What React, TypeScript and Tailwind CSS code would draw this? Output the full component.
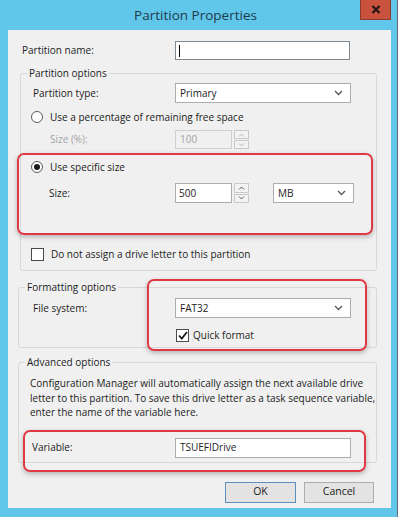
import React from "react";

function Chevron() {
  return (
    <svg width="9" height="6" viewBox="0 0 9 6">
      <path d="M1 1l3.5 3.5L8 1" stroke="#555" strokeWidth="1.3" fill="none" />
    </svg>
  );
}

function Select({ value, width }: { value: string; width: string }) {
  return (
    <div className={`${width} h-full bg-white border border-[#acacac] flex items-center justify-between pl-[4px] pr-[7px]`}>
      <span>{value}</span>
      <Chevron />
    </div>
  );
}

function Spinner({ disabled }: { disabled?: boolean }) {
  const c = disabled ? "#b5b5b5" : "#606060";
  return (
    <div className="ml-[2px] w-[15px] h-full flex flex-col gap-[1px]">
      <div className="flex-1 border border-[#c9c9c9] bg-[#f3f3f3] flex items-center justify-center">
        <svg width="7" height="4" viewBox="0 0 7 4">
          <path d="M1 3.5l2.5-2.5L6 3.5" stroke={c} strokeWidth="1" fill="none" />
        </svg>
      </div>
      <div className="flex-1 border border-[#c9c9c9] bg-[#f3f3f3] flex items-center justify-center">
        <svg width="7" height="4" viewBox="0 0 7 4">
          <path d="M1 0.5l2.5 2.5L6 0.5" stroke={c} strokeWidth="1" fill="none" />
        </svg>
      </div>
    </div>
  );
}

function Radio({ checked }: { checked?: boolean }) {
  return (
    <div className="w-[12px] h-[12px] rounded-full border border-[#5a5a5a] bg-white flex items-center justify-center">
      {checked && <div className="w-[6px] h-[6px] rounded-full bg-[#1a1a1a]" />}
    </div>
  );
}

function Checkbox({ checked }: { checked?: boolean }) {
  return (
    <div className="w-[13px] h-[13px] border border-[#4a4a4a] bg-white flex items-center justify-center">
      {checked && (
        <svg width="10" height="9" viewBox="0 0 10 9">
          <path d="M1 4.5l2.8 3L9 1" stroke="#1a1a1a" strokeWidth="1.8" fill="none" />
        </svg>
      )}
    </div>
  );
}

function Legend({ children }: { children: React.ReactNode }) {
  return (
    <span className="self-start -mt-[8px] ml-[6px] px-[2px] h-[14px] leading-[14px] bg-[#f0f0f0]">
      {children}
    </span>
  );
}

export default function App() {
  return (
    <div className="w-[400px] h-[517px] flex bg-white overflow-hidden font-['Open_Sans','Noto_Sans',sans-serif] text-[10px] text-[#1c1c1c]">
      <div className="w-[397px] h-full bg-[#60c6ea] flex flex-col">
        {/* title bar */}
        <div className="h-[30px] flex">
          <div className="flex-1" />
          <div className="text-[13.5px] text-[#1f3b4b] leading-[30px]">Partition Properties</div>
          <div className="flex-1 flex justify-end items-start pr-[6px]">
            <div className="w-[31px] h-[20px] bg-[#c9523f] border border-[#8e3a2c] border-t-0 flex items-center justify-center">
              <svg width="10" height="9" viewBox="0 0 10 9">
                <path d="M1.5 1l7 7M8.5 1l-7 7" stroke="#231512" strokeWidth="2.2" />
              </svg>
            </div>
          </div>
        </div>

        {/* client area */}
        <div className="relative ml-[8px] mr-[6px] h-[478px] bg-[#f0f0f0] flex flex-col">
          <div className="mt-[11px] h-[19px] flex items-center">
            <div className="w-[167px] pl-[14px]">Partition name:</div>
            <div className="w-[175px] h-full bg-white border border-[#7f8a93] flex items-center pl-[3px]">
              <div className="w-px h-[12px] bg-black" />
            </div>
          </div>

          {/* Partition options */}
          <div className="mt-[13px] ml-[12px] w-[357px] border border-[#d8d8d8] rounded-[3px] flex flex-col pb-[9px]">
            <Legend>Partition options</Legend>
            <div className="mt-[3px] h-[20px] flex items-center">
              <div className="w-[154px] pl-[12px]">Partition type:</div>
              <Select value="Primary" width="w-[176px]" />
            </div>
            <div className="mt-[7px] h-[14px] flex items-center pl-[10px] gap-[7px]">
              <Radio />
              <span>Use a percentage of remaining free space</span>
            </div>
            <div className="mt-[6px] h-[19px] flex items-center">
              <div className="w-[154px] pl-[29px] text-[#a3a3a3]">Size (%):</div>
              <div className="w-[57px] h-full border border-[#cfcfcf] bg-[#f0f0f0] flex items-center pl-[4px] text-[#a3a3a3]">100</div>
              <Spinner disabled />
            </div>
            <div className="mt-[11px] h-[14px] flex items-center pl-[10px] gap-[7px]">
              <Radio checked />
              <span>Use specific size</span>
            </div>
            <div className="mt-[9px] h-[20px] flex items-center">
              <div className="w-[154px] pl-[28px]">Size:</div>
              <div className="w-[57px] h-full border border-[#acacac] bg-white flex items-center pl-[3px]">500</div>
              <Spinner />
              <div className="ml-[24px] h-full flex">
                <Select value="MB" width="w-[81px]" />
              </div>
            </div>
            <div className="mt-[44px] h-[14px] flex items-center pl-[10px] gap-[7px]">
              <Checkbox />
              <span>Do not assign a drive letter to this partition</span>
            </div>
          </div>

          {/* Formatting options */}
          <div className="mt-[16px] ml-[10px] w-[359px] border border-[#d8d8d8] rounded-[3px] flex flex-col pb-[5px]">
            <Legend>Formatting options</Legend>
            <div className="mt-[4px] h-[20px] flex items-center">
              <div className="w-[156px] pl-[14px]">File system:</div>
              <Select value="FAT32" width="w-[176px]" />
            </div>
            <div className="mt-[10px] h-[14px] flex items-center pl-[157px] gap-[4px]">
              <Checkbox checked />
              <span>Quick format</span>
            </div>
          </div>

          {/* Advanced options */}
          <div className="mt-[14px] ml-[10px] w-[359px] border border-[#d8d8d8] rounded-[3px] flex flex-col pb-[4px]">
            <Legend>Advanced options</Legend>
            <p className="mt-[7px] pl-[11px] leading-[14.5px] whitespace-nowrap">
              Configuration Manager will automatically assign the next available drive
              <br />
              letter to this partition. To save this drive letter as a task sequence variable,
              <br />
              enter the name of the variable here.
            </p>
            <div className="mt-[18px] h-[20px] flex items-center">
              <div className="w-[156px] pl-[13px]">Variable:</div>
              <div className="w-[176px] h-full border border-[#acacac] bg-white flex items-center pl-[4px]">TSUEFIDrive</div>
            </div>
          </div>

          <div className="mt-[19px] h-[21px] flex justify-end gap-[8px] pr-[17px]">
            <button className="w-[71px] h-full bg-[#e3e3e3] border border-[#5b8fbd] text-[10.5px]">OK</button>
            <button className="w-[70px] h-full bg-[#e3e3e3] border border-[#adadad] text-[10.5px]">Cancel</button>
          </div>

          {/* red annotation boxes */}
          <div className="absolute left-[9px] top-[123px] w-[356px] h-[82px] border-2 border-[#de3a43] rounded-[7px] shadow-[0_2px_5px_rgba(0,0,0,0.25)]" />
          <div className="absolute left-[139px] top-[249px] w-[220px] h-[72px] border-2 border-[#de3a43] rounded-[7px] shadow-[0_2px_5px_rgba(0,0,0,0.25)]" />
          <div className="absolute left-[15px] top-[400px] w-[343px] h-[42px] border-2 border-[#de3a43] rounded-[7px] shadow-[0_2px_5px_rgba(0,0,0,0.25)]" />
        </div>
        <div className="flex-1" />
      </div>
      <div className="w-px h-full bg-[#6a6a6a]" />
      <div className="flex-1 h-full bg-white" />
    </div>
  );
}
